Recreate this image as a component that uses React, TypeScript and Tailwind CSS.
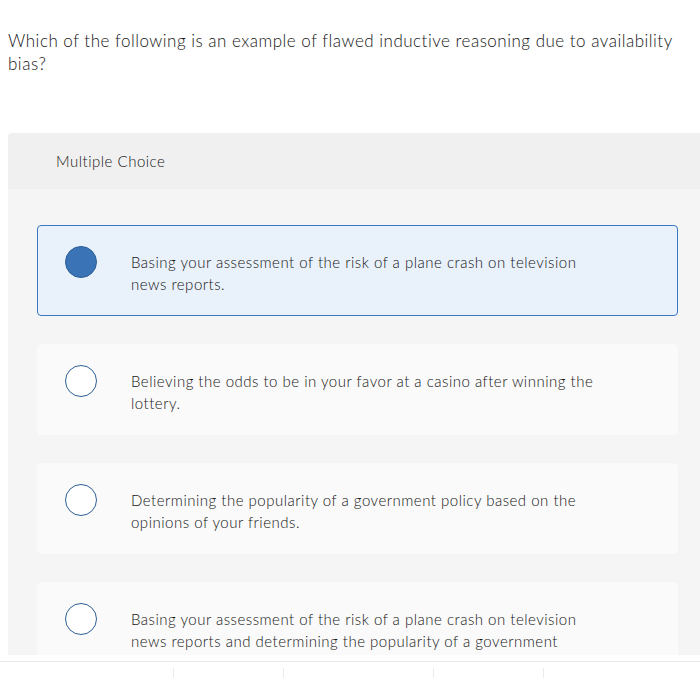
import React from "react";

const options: { lines: string[]; selected?: boolean }[] = [
  { lines: ["Basing your assessment of the risk of a plane crash on television", "news reports."], selected: true },
  { lines: ["Believing the odds to be in your favor at a casino after winning the", "lottery."] },
  { lines: ["Determining the popularity of a government policy based on the", "opinions of your friends."] },
  {
    lines: [
      "Basing your assessment of the risk of a plane crash on television",
      "news reports and determining the popularity of a government",
      "policy based on the opinions of your friends.",
    ],
  },
];

export default function App() {
  return (
    <div className="w-[700px] h-[678px] bg-white overflow-hidden text-[#151515] font-light tracking-[0.5px] [font-family:Lato,'Noto_Sans',sans-serif]">
      <div className="h-[655px] overflow-hidden">
        <div className="pl-[8px] pt-[29px] pr-[10px] text-[17px] leading-[23px]">
          <p className="whitespace-nowrap">Which of the following is an example of flawed inductive reasoning due to availability</p>
          <p>bias?</p>
        </div>
        <div className="ml-[8px] mt-[58px] rounded-tl-[4px] bg-[#f5f5f5]">
          <div className="h-[56px] bg-[#f0f0f0] rounded-tl-[4px] flex items-center pl-[48px] text-[15px]">
            Multiple Choice
          </div>
          <div className="pl-[29px] pr-[22px] pt-[36px] flex flex-col gap-[28px]">
            {options.map((o, i) => (
              <div
                key={i}
                className={
                  o.selected
                    ? "min-h-[91px] rounded-[4px] border border-[#3b78c4] bg-[#e9f1fb] flex items-start pl-[27px] pt-[20px]"
                    : "min-h-[91px] rounded-[4px] border border-[#fafafa] bg-[#fafafa] flex items-start pl-[27px] pt-[20px]"
                }
              >
                {o.selected ? (
                  <div className="w-[32px] h-[32px] rounded-full bg-[#3a73b6] border border-[#2e5e97] shrink-0" />
                ) : (
                  <div className="w-[32px] h-[32px] rounded-full bg-white border-[1.5px] border-[#2f5f94] shrink-0" />
                )}
                <div className="ml-[34px] pt-[5px] text-[15px] leading-[22px]">
                  {o.lines.map((l, j) => (
                    <div key={j} className="whitespace-nowrap">{l}</div>
                  ))}
                </div>
              </div>
            ))}
          </div>
        </div>
      </div>
      <div className="h-[23px] pt-[6px] bg-white">
        <div className="h-full border-t border-[#ebebeb] pt-[6px] flex">
          <div className="w-[173px] shrink-0" />
          <div className="w-[110px] shrink-0 border-l border-[#ebebeb]" />
          <div className="w-[150px] shrink-0 border-l border-[#ebebeb]" />
          <div className="w-[110px] shrink-0 border-l border-[#ebebeb]" />
          <div className="flex-1 border-l border-[#ebebeb]" />
        </div>
      </div>
    </div>
  );
}
